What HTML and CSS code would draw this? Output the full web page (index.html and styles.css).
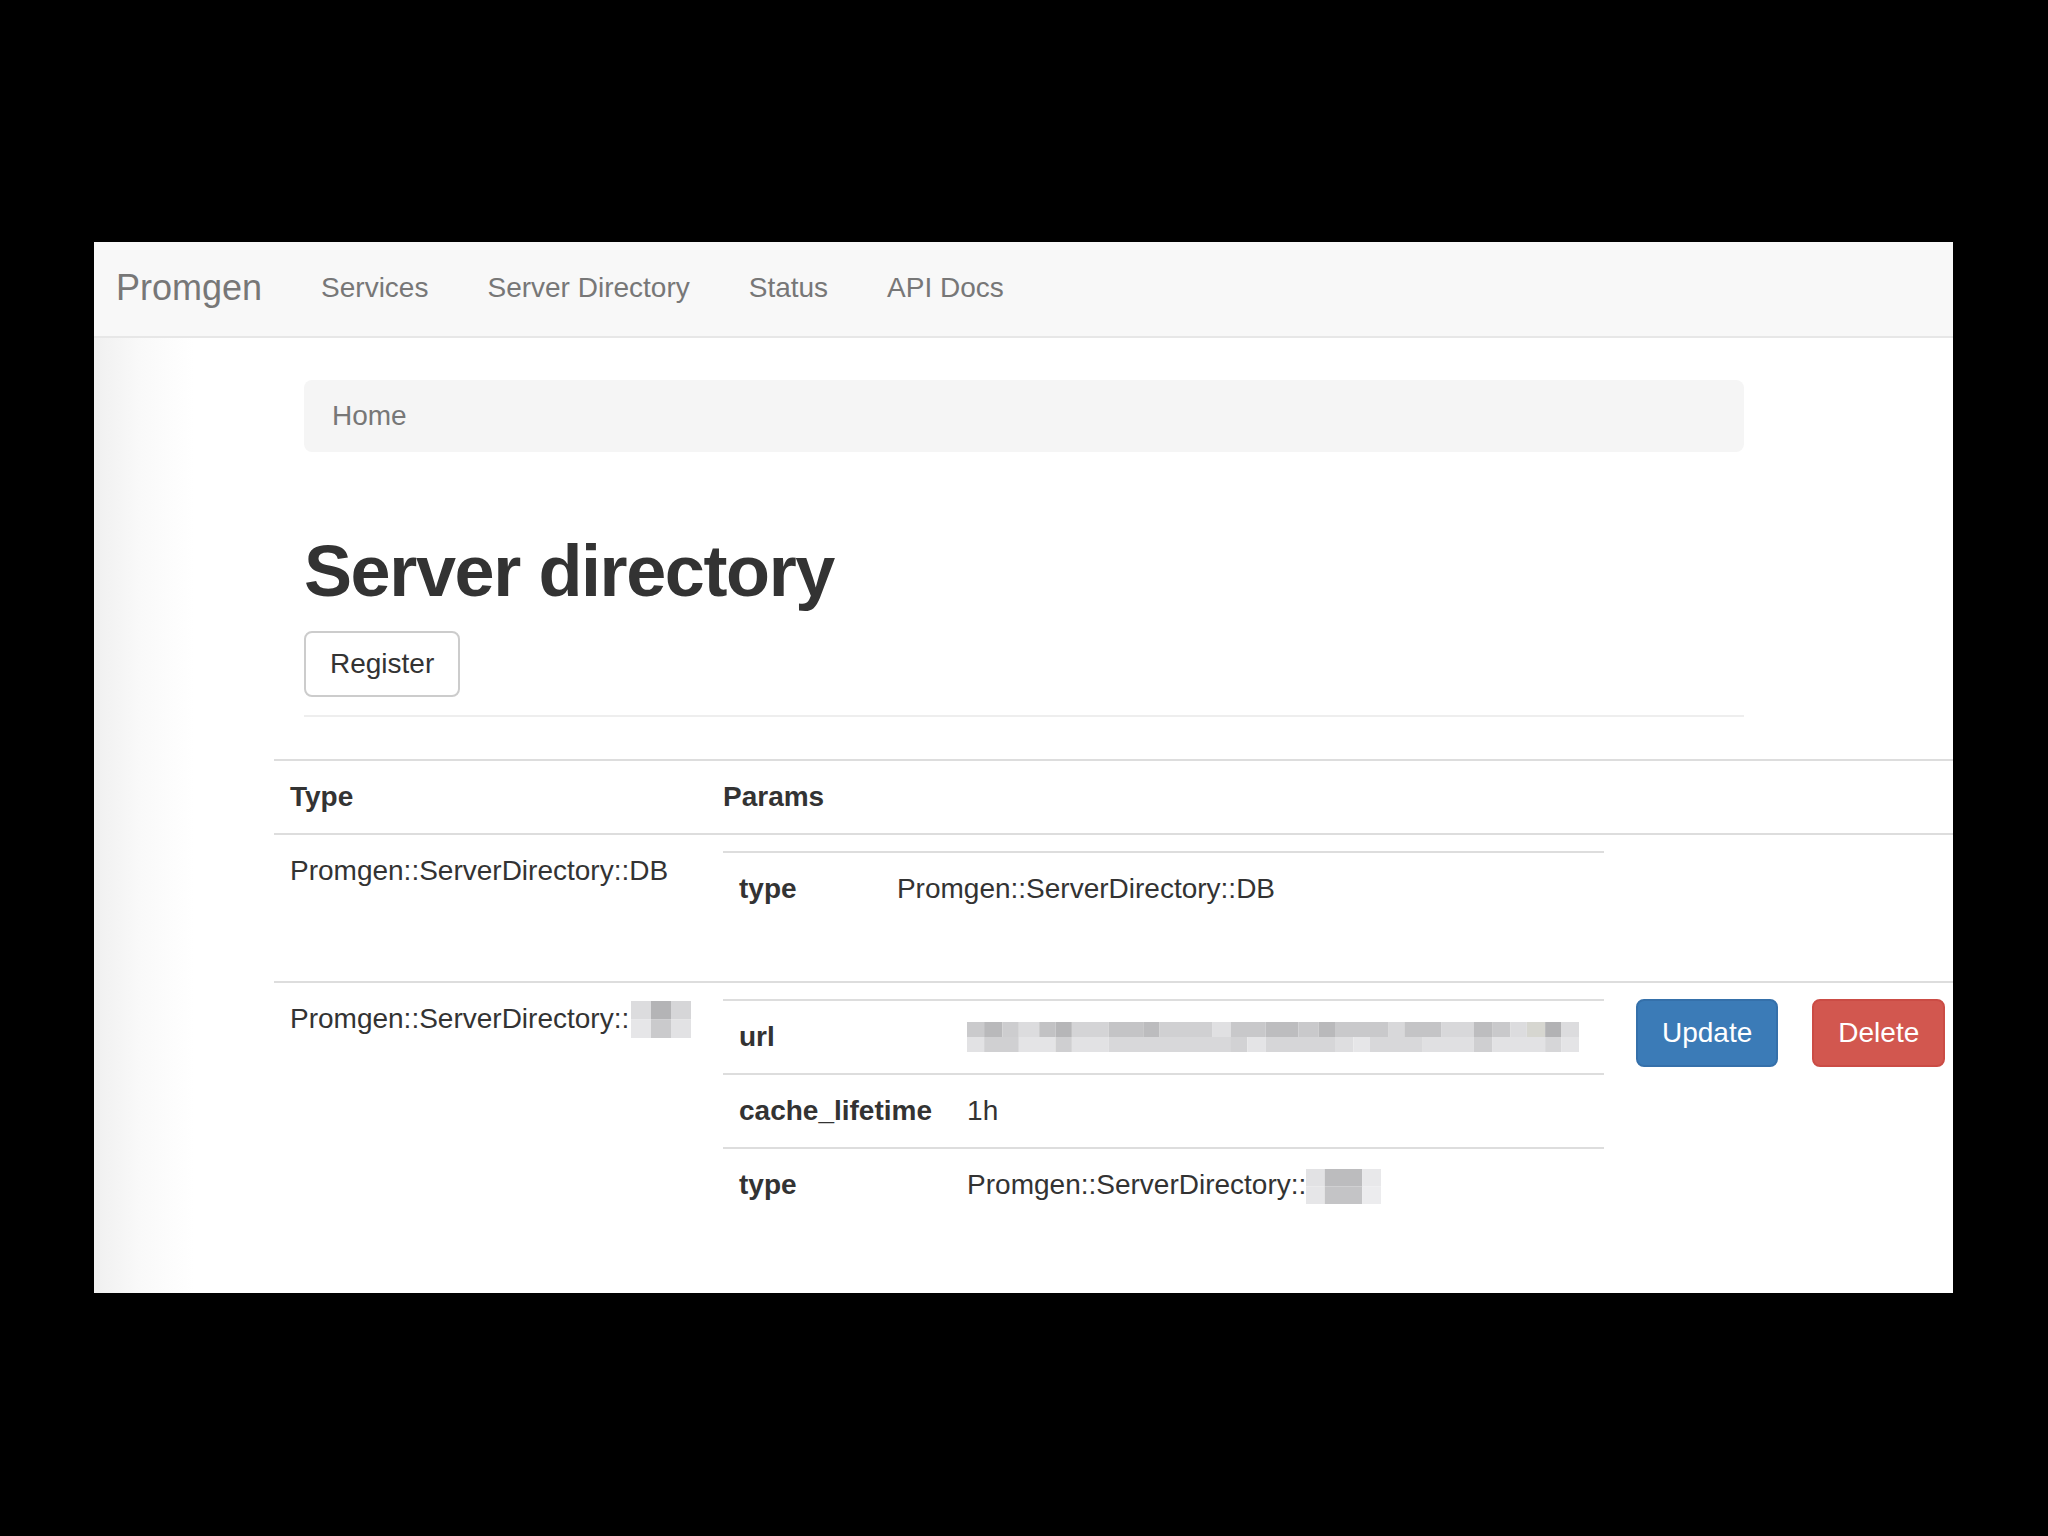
FILE: index.html
```html
<!DOCTYPE html>
<html lang="en">
<head>
<meta charset="utf-8">
<title>Server directory - Promgen</title>
<link rel="stylesheet" href="styles.css">
</head>
<body>
<div class="screen">
  <nav class="navbar">
    <span class="brand">Promgen</span>
    <a class="nav-link">Services</a>
    <a class="nav-link">Server Directory</a>
    <a class="nav-link">Status</a>
    <a class="nav-link">API Docs</a>
  </nav>
  <main class="page">
    <div class="container">
      <div class="breadcrumb">Home</div>
      <div class="page-header">
        <h1>Server directory</h1>
        <button class="btn btn-default">Register</button>
      </div>
    </div>
    <table class="table main-table">
      <colgroup><col class="col-type"><col class="col-params"><col class="col-actions"></colgroup>
      <thead>
        <tr><th>Type</th><th>Params</th><th></th></tr>
      </thead>
      <tbody>
        <tr>
          <td>Promgen::ServerDirectory::DB</td>
          <td>
            <table class="table nested">
              <tr><th>type</th><td>Promgen::ServerDirectory::DB</td></tr>
            </table>
          </td>
          <td></td>
        </tr>
        <tr>
          <td>Promgen::ServerDirectory::<svg class="blur blur-name" viewBox="0 0 3 2" preserveAspectRatio="none"><rect x="0" y="0" width="1" height="1" fill="#dcdcde"/><rect x="1" y="0" width="1" height="1" fill="#b4b4b6"/><rect x="2" y="0" width="1" height="1" fill="#d6d6d8"/><rect x="0" y="1" width="1" height="1" fill="#e6e6e8"/><rect x="1" y="1" width="1" height="1" fill="#cacacc"/><rect x="2" y="1" width="1" height="1" fill="#e2e2e4"/></svg></td>
          <td>
            <table class="table nested">
              <tr><th>url</th><td><svg class="blur blur-url" viewBox="48 0 1500 2" preserveAspectRatio="none">
                <rect x="48" y="0" width="42" height="1" fill="#cacacc"/>
                <rect x="90" y="0" width="45" height="1" fill="#b9b9bb"/>
                <rect x="135" y="0" width="40" height="1" fill="#cdcdcf"/>
                <rect x="175" y="0" width="50" height="1" fill="#dcdcde"/>
                <rect x="225" y="0" width="40" height="1" fill="#c2c2c4"/>
                <rect x="265" y="0" width="40" height="1" fill="#b6b6b8"/>
                <rect x="305" y="0" width="90" height="1" fill="#d4d4d6"/>
                <rect x="395" y="0" width="85" height="1" fill="#c4c4c6"/>
                <rect x="480" y="0" width="40" height="1" fill="#bcbcbe"/>
                <rect x="520" y="0" width="130" height="1" fill="#d0d0d2"/>
                <rect x="650" y="0" width="45" height="1" fill="#e0e0e2"/>
                <rect x="695" y="0" width="85" height="1" fill="#c8c8ca"/>
                <rect x="780" y="0" width="80" height="1" fill="#bdbdbf"/>
                <rect x="860" y="0" width="50" height="1" fill="#c9c9cb"/>
                <rect x="910" y="0" width="40" height="1" fill="#b9b9bb"/>
                <rect x="950" y="0" width="130" height="1" fill="#c9c9cb"/>
                <rect x="1080" y="0" width="40" height="1" fill="#d8d8da"/>
                <rect x="1120" y="0" width="90" height="1" fill="#c4c4c6"/>
                <rect x="1210" y="0" width="80" height="1" fill="#d8d8da"/>
                <rect x="1290" y="0" width="45" height="1" fill="#bdbdbf"/>
                <rect x="1335" y="0" width="45" height="1" fill="#c9c9cb"/>
                <rect x="1380" y="0" width="40" height="1" fill="#dcdcde"/>
                <rect x="1420" y="0" width="45" height="1" fill="#d6d6d0"/>
                <rect x="1465" y="0" width="40" height="1" fill="#b2b2b4"/>
                <rect x="1505" y="0" width="43" height="1" fill="#dcdcde"/>
                <rect x="48" y="1" width="42" height="1" fill="#e2e2e4"/>
                <rect x="90" y="1" width="85" height="1" fill="#d0d0d2"/>
                <rect x="175" y="1" width="90" height="1" fill="#e4e4e6"/>
                <rect x="265" y="1" width="40" height="1" fill="#cfcfd1"/>
                <rect x="305" y="1" width="90" height="1" fill="#e2e2e4"/>
                <rect x="395" y="1" width="300" height="1" fill="#d8d8da"/>
                <rect x="695" y="1" width="40" height="1" fill="#d2d2d4"/>
                <rect x="735" y="1" width="45" height="1" fill="#e4e4e6"/>
                <rect x="780" y="1" width="170" height="1" fill="#d6d6d8"/>
                <rect x="950" y="1" width="45" height="1" fill="#dedee0"/>
                <rect x="995" y="1" width="40" height="1" fill="#e6e6e8"/>
                <rect x="1035" y="1" width="130" height="1" fill="#d8d8da"/>
                <rect x="1165" y="1" width="125" height="1" fill="#e0e0e2"/>
                <rect x="1290" y="1" width="45" height="1" fill="#cfcfd1"/>
                <rect x="1335" y="1" width="130" height="1" fill="#e2e2e4"/>
                <rect x="1465" y="1" width="40" height="1" fill="#d6d6d8"/>
                <rect x="1505" y="1" width="43" height="1" fill="#e4e4e6"/>
              </svg></td></tr>
              <tr><th>cache_lifetime</th><td>1h</td></tr>
              <tr><th>type</th><td>Promgen::ServerDirectory::<svg class="blur blur-type" viewBox="0 0 4 2" preserveAspectRatio="none"><rect x="0" y="0" width="1" height="1" fill="#e2e2e4"/><rect x="1" y="0" width="2" height="1" fill="#bcbcbe"/><rect x="3" y="0" width="1" height="1" fill="#e8e8ea"/><rect x="0" y="1" width="1" height="1" fill="#e6e6e8"/><rect x="1" y="1" width="2" height="1" fill="#c4c4c6"/><rect x="3" y="1" width="1" height="1" fill="#ececee"/></svg></td></tr>
            </table>
          </td>
          <td>
            <div class="actions">
              <button class="btn btn-primary">Update</button>
              <button class="btn btn-danger">Delete</button>
            </div>
          </td>
        </tr>
      </tbody>
    </table>
  </main>
</div>
</body>
</html>
```

FILE: styles.css
```css
html, body {
  margin: 0;
  padding: 0;
  background: #000;
}

body {
  padding: 242px 0 0 94px;
  font-family: "Liberation Sans", Arial, sans-serif;
  font-size: 28px;
  line-height: 40px;
  color: #333;
}

.screen {
  width: 1859px;
  height: 1051px;
  background: #fff;
  overflow: hidden;
  display: flex;
  flex-direction: column;
}

.navbar {
  flex: none;
  box-sizing: border-box;
  height: 96px;
  background: #f8f8f8;
  border-bottom: 2px solid #e7e7e7;
  display: flex;
  align-items: center;
  gap: 59px;
  padding: 0 0 3px 22px;
}

.brand {
  font-size: 36px;
  color: #777;
  line-height: 40px;
}

.nav-link {
  color: #777;
  text-decoration: none;
  font-size: 28px;
}

.page {
  flex: 1;
  background: linear-gradient(90deg, #f0f0f0 0, #f9f9f9 45px, #fff 100px);
}

.container {
  margin-left: 210px;
  width: 1440px;
}

.breadcrumb {
  margin-top: 42px;
  padding: 16px 28px;
  background: #f5f5f5;
  border-radius: 8px;
  color: #777;
}

.page-header {
  padding-bottom: 18px;
  border-bottom: 2px solid #eee;
}

.page-header h1 {
  margin: 80px 0 20px;
  font-size: 72px;
  line-height: 79px;
  font-weight: 700;
  letter-spacing: -1.4px;
  color: #333;
}

.btn {
  display: inline-block;
  font-family: inherit;
  font-size: 28px;
  line-height: 40px;
  padding: 12px 24px;
  border: 2px solid transparent;
  border-radius: 8px;
  cursor: pointer;
}

.btn-default {
  background: #fff;
  border-color: #ccc;
  color: #333;
  padding-top: 11px;
  padding-bottom: 11px;
}

.btn-primary {
  background: #3b7bb7;
  border-color: #3570aa;
  color: #fff;
}

.btn-danger {
  background: #d2574f;
  border-color: #cb4c45;
  color: #fff;
}

.table {
  border-collapse: collapse;
  border-spacing: 0;
}

.table th {
  font-weight: 700;
  text-align: left;
}

.table th,
.table td {
  padding: 16px;
  vertical-align: top;
  border-top: 2px solid #ddd;
  white-space: nowrap;
}

.main-table {
  margin: 42px 0 0 180px;
  width: 1720px;
  table-layout: fixed;
}

.col-type { width: 433px; }
.col-params { width: 913px; }

.nested {
  width: 100%;
  margin-bottom: 40px;
  table-layout: auto;
}

.blur {
  display: inline-block;
}

.blur-name {
  width: 60px;
  height: 37px;
  vertical-align: -10px;
  margin-left: 2px;
}

.blur-url {
  width: 612px;
  height: 30px;
  vertical-align: -6px;
}

.blur-type {
  width: 75px;
  height: 35px;
  vertical-align: -10px;
}

.actions {
  display: flex;
  gap: 34px;
}
```
